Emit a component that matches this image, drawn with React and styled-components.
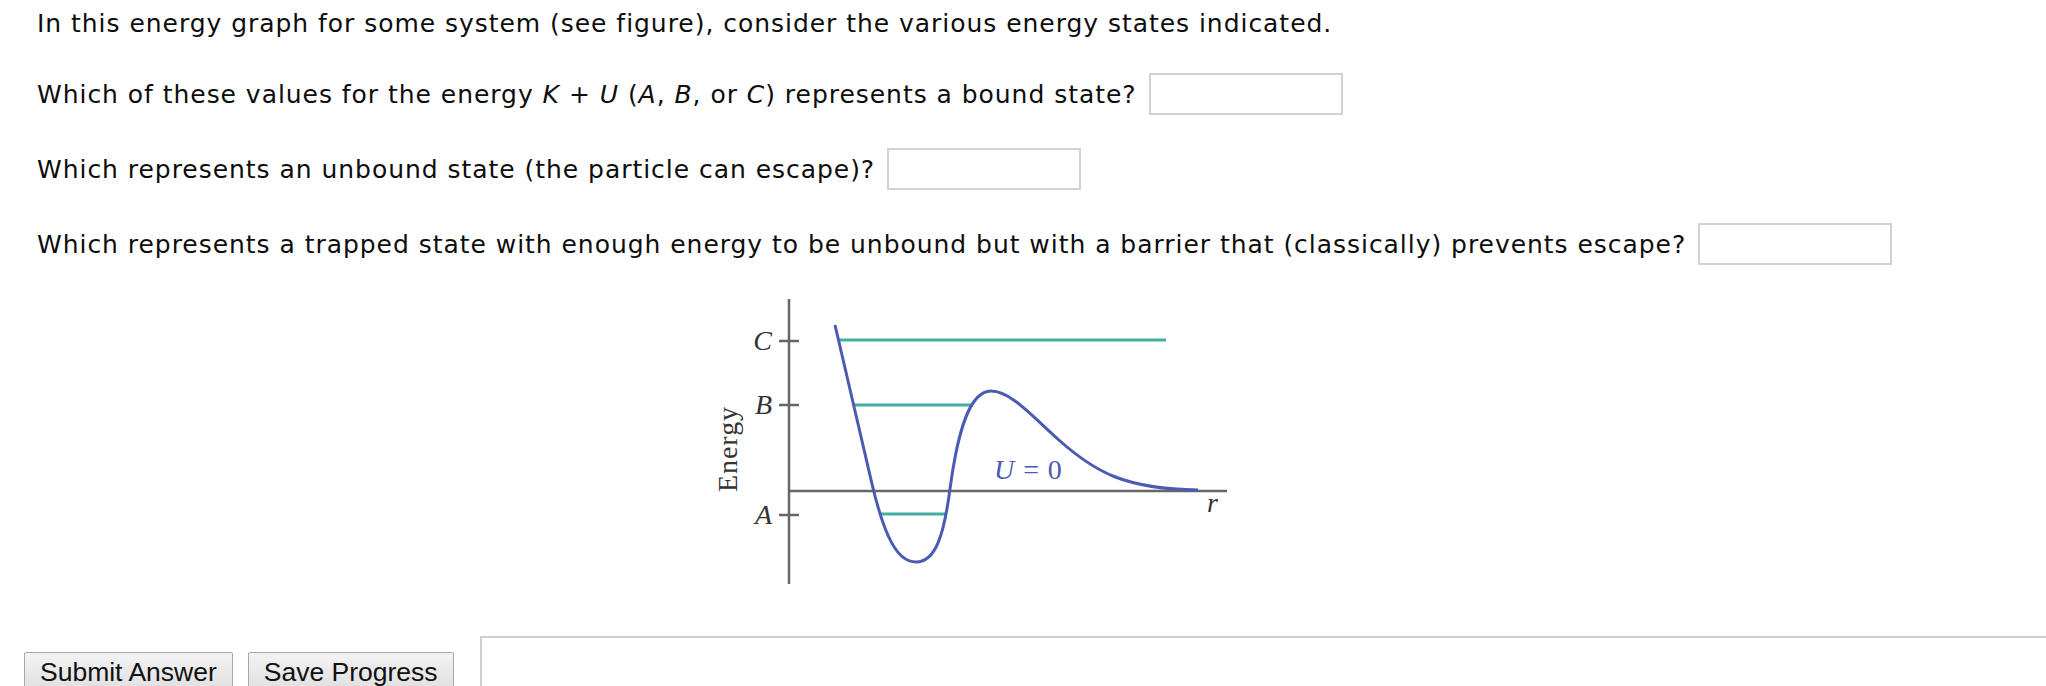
import React from 'react'
import styled, { createGlobalStyle } from 'styled-components'

const GlobalStyle = createGlobalStyle`
  html, body {
    margin: 0;
    padding: 0;
    background: #fff;
    overflow: hidden;
  }
`

const Page = styled.div`
  width: 2046px;
  height: 686px;
  overflow: hidden;
  font-family: "DejaVu Sans", Verdana, sans-serif;
  font-size: 25px;
  letter-spacing: 0.96px;
  color: #0d0d0d;
`

const Intro = styled.p`
  margin: 0;
  padding: 9px 0 0 37px;
  line-height: 30px;
`

const Questions = styled.div`
  display: flex;
  flex-direction: column;
  gap: 33px;
  padding: 34px 0 0 37px;
`

const Row = styled.div`
  display: flex;
  align-items: center;
  gap: 12px;
  height: 42px;
`

const AnswerBox = styled.input`
  box-sizing: border-box;
  width: 194px;
  height: 42px;
  margin: 0;
  border: 2px solid #d2d2d2;
  background: #fff;
  outline: none;
`

const Figure = styled.div`
  margin: 29px 0 0 700px;
  width: 540px;
  height: 295px;
`

const Footer = styled.div`
  display: flex;
  align-items: flex-start;
  gap: 15px;
  margin-top: 47px;
  padding-left: 24px;
  letter-spacing: 0;
`

const Button = styled.button`
  box-sizing: border-box;
  margin-top: 16px;
  height: 46px;
  padding: 4px 15px 0;
  align-self: flex-start;
  display: flex;
  align-items: flex-start;
  font-family: "Liberation Sans", Arial, sans-serif;
  font-size: 26.5px;
  color: #111;
  background: linear-gradient(#f3f3f3, #dcdcdc);
  border: 1px solid #a8a8a8;
  border-radius: 2px;
`

const Notes = styled.div`
  flex: 1;
  height: 120px;
  margin-right: -10px;
  margin-left: 11px;
  border: 2px solid #cfcfcf;
  background: #fff;
`

const AXIS = '#676767'
const TEAL = '#3fafa6'
const BLUE = '#4a5bb1'

const EnergyGraph = () => (
  <svg width="540" height="295" viewBox="0 0 540 295">
    <g fontFamily='"Liberation Serif", "Times New Roman", serif' fontSize="28" fill="#333">
      <text x="37" y="155" textAnchor="middle" transform="rotate(-90 37 155)">Energy</text>
      <text x="73" y="56" textAnchor="end" fontStyle="italic">C</text>
      <text x="73" y="120" textAnchor="end" fontStyle="italic">B</text>
      <text x="73" y="230" textAnchor="end" fontStyle="italic">A</text>
      <text x="507" y="218" fontStyle="italic">r</text>
      <text x="294" y="185" fill={BLUE}>
        <tspan fontStyle="italic">U</tspan> = 0
      </text>
    </g>
    <g stroke={AXIS} strokeWidth="2.5" fill="none">
      <line x1="89" y1="5" x2="89" y2="290" />
      <line x1="89" y1="197" x2="527" y2="197" />
      <line x1="79" y1="47" x2="99" y2="47" />
      <line x1="79" y1="111" x2="99" y2="111" />
      <line x1="79" y1="221" x2="99" y2="221" />
    </g>
    <g stroke={TEAL} strokeWidth="3" fill="none">
      <line x1="139" y1="46" x2="466" y2="46" />
      <line x1="153" y1="111" x2="272" y2="111" />
      <line x1="180" y1="220" x2="246" y2="220" />
    </g>
    <path
      d="M135,31 L172,190 C185,245 198,268 216,268 C236,268 244,240 250,195 C258,135 270,97 291,97 C310,97 330,120 360,147 C395,178 425,195 498,196"
      stroke={BLUE}
      strokeWidth="3"
      fill="none"
    />
  </svg>
)

export default function App() {
  return (
    <Page>
      <GlobalStyle />
      <Intro>In this energy graph for some system (see figure), consider the various energy states indicated.</Intro>
      <Questions>
        <Row>
          <span>
            Which of these values for the energy <i>K</i> + <i>U</i> (<i>A</i>, <i>B</i>, or <i>C</i>) represents a bound state?
          </span>
          <AnswerBox />
        </Row>
        <Row>
          <span>Which represents an unbound state (the particle can escape)?</span>
          <AnswerBox />
        </Row>
        <Row>
          <span>Which represents a trapped state with enough energy to be unbound but with a barrier that (classically) prevents escape?</span>
          <AnswerBox />
        </Row>
      </Questions>
      <Figure>
        <EnergyGraph />
      </Figure>
      <Footer>
        <Button>Submit Answer</Button>
        <Button>Save Progress</Button>
        <Notes />
      </Footer>
    </Page>
  )
}
